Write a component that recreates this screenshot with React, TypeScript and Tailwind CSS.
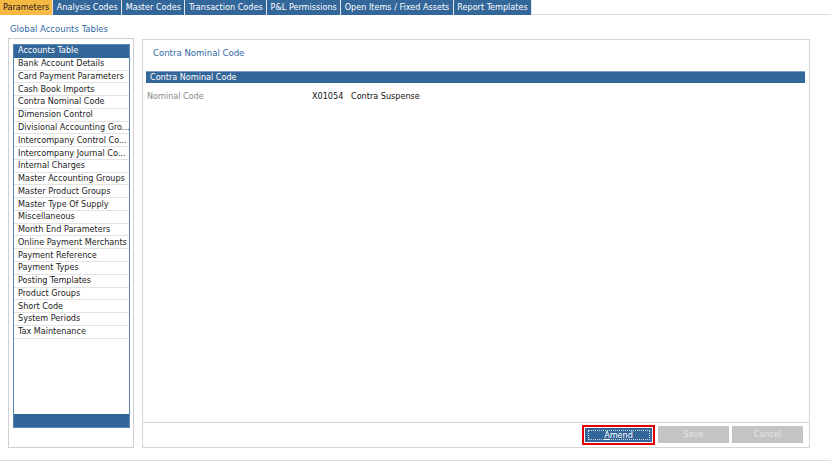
const tabs = [
  "Parameters",
  "Analysis Codes",
  "Master Codes",
  "Transaction Codes",
  "P&L Permissions",
  "Open Items / Fixed Assets",
  "Report Templates",
]

const items = [
  "Accounts Table",
  "Bank Account Details",
  "Card Payment Parameters",
  "Cash Book Imports",
  "Contra Nominal Code",
  "Dimension Control",
  "Divisional Accounting Gro...",
  "Intercompany Control Co...",
  "Intercompany Journal Co...",
  "Internal Charges",
  "Master Accounting Groups",
  "Master Product Groups",
  "Master Type Of Supply",
  "Miscellaneous",
  "Month End Parameters",
  "Online Payment Merchants",
  "Payment Reference",
  "Payment Types",
  "Posting Templates",
  "Product Groups",
  "Short Code",
  "System Periods",
  "Tax Maintenance",
]

export default function App() {
  return (
    <div className="w-[831px] h-[461px] bg-white overflow-hidden text-[9px] leading-none whitespace-nowrap text-[#222] font-['DejaVu_Sans_Condensed','Liberation_Sans',sans-serif]">
      {/* Tabs */}
      <div className="flex h-[15px] border-b border-[#dcdcdc]">
        {tabs.map((t, i) => (
          <div
            key={t}
            className={
              i === 0
                ? "flex items-center px-[3px] h-[15px] bg-[#f5b843] text-[#1a1a1a] border-r border-[#e6e6e6]"
                : "flex items-center px-[3.5px] h-[15px] bg-[#336699] text-white border-r border-[#dfe6ee]"
            }
          >
            {t}
          </div>
        ))}
      </div>

      {/* Page title */}
      <div className="h-[23px] pl-[10px] pt-[9px] text-[#2f6aa3] text-[9.5px]">Global Accounts Tables</div>

      <div className="flex h-[410px] pl-[8px]">
        {/* Left list */}
        <div className="w-[126px] h-[410px] border border-[#cfcfcf] pt-[5px] pl-[4px]">
          <div className="w-[117px] h-[384px] border border-[#5b86b3] flex flex-col">
            <div className="flex-1">
              {items.map((it, i) => (
                <div
                  key={it}
                  className={
                    i === 0
                      ? "h-[12.77px] flex items-center pl-[4px] overflow-hidden bg-[#336699] text-white border-b border-[#336699]"
                      : "h-[12.77px] flex items-center pl-[4px] overflow-hidden text-[#222] border-b border-[#e2e2e2]"
                  }
                >
                  {it}
                </div>
              ))}
            </div>
            <div className="h-[13px] bg-[#336699]" />
          </div>
        </div>

        {/* Right panel */}
        <div className="ml-[8px] mt-[1px] w-[668px] h-[409px] border border-[#d4d4d4] flex flex-col">
          <div className="flex-1 px-[3px]">
            <div className="pl-[7px] pt-[8px] h-[31px] text-[#2f6aa3] text-[9.5px]">Contra Nominal Code</div>
            <div className="h-[12px] mr-[1px] bg-[#336699] border-t border-[#7aa0c6] text-white flex items-center pl-[4px]">
              Contra Nominal Code
            </div>
            <div className="flex items-center h-[26px]">
              <div className="w-[166px] pl-[1px] text-[#8a8a8a]">Nominal Code</div>
              <div className="text-[#111]">X01054&nbsp;&nbsp;&nbsp;Contra Suspense</div>
            </div>
          </div>
          <div className="h-[25px] border-t border-[#d4d4d4] flex items-start justify-end pr-[6px] pt-[2px] gap-[3px]">
            <div className="w-[73px] h-[20px] border-2 border-[#e00000] p-[1px]">
              <div className="h-full bg-[#336699] flex items-center justify-center">
                <div className="w-[62px] h-[10px] border border-dotted border-[#cfd9e4] flex items-center justify-center text-white">
                  <span><span className="underline">A</span>mend</span>
                </div>
              </div>
            </div>
            <div className="mt-[1px] w-[71px] h-[17px] bg-[#c4c4c4] flex items-center justify-center text-[#e6e6e6]">Save</div>
            <div className="mt-[1px] w-[71px] h-[17px] bg-[#c4c4c4] flex items-center justify-center text-[#e6e6e6]">Cancel</div>
          </div>
        </div>
      </div>

      <div className="mt-[12px] border-b border-[#dcdcdc]" />
    </div>
  )
}
